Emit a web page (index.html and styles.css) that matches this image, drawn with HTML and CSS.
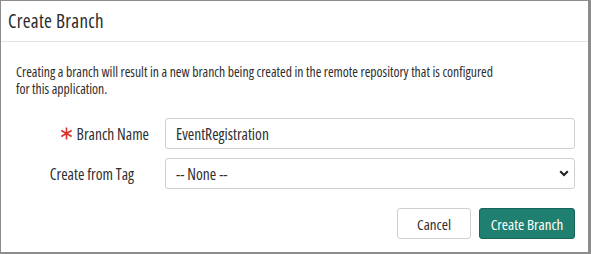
FILE: index.html
```html
<!DOCTYPE html>
<html lang="en">
<head>
    <meta charset="UTF-8">
    <title>Create Branch</title>
    <link rel="stylesheet" href="styles.css">
</head>
<body>
    <div class="modal">
        <div class="modal-header">
            <h1>Create Branch</h1>
        </div>
        <div class="modal-body">
            <p class="intro">Creating a branch will result in a new branch being created in the remote repository that is configured for this application.</p>
            <div class="form-row">
                <label class="form-label" for="branchName">
                    <svg class="required" width="13" height="13" viewBox="0 0 13 13"><path d="M6.5 0.5 V12.5 M1.3 3.5 L11.7 9.5 M1.3 9.5 L11.7 3.5" stroke="#d9312b" stroke-width="1.6" fill="none"/></svg>
                    Branch Name
                </label>
                <input type="text" id="branchName" class="form-control" value="EventRegistration">
            </div>
            <div class="form-row">
                <label class="form-label form-label-optional" for="tag">Create from Tag</label>
                <div class="select-wrap">
                    <select id="tag" class="form-control">
                        <option>-- None --</option>
                    </select>
                    <svg class="chevron" width="10" height="7" viewBox="0 0 10 7"><path d="M1.2 1.2 L5 5 L8.8 1.2" fill="none" stroke="#222" stroke-width="2"/></svg>
                </div>
            </div>
            <div class="actions">
                <button class="btn btn-cancel">Cancel</button>
                <button class="btn btn-primary">Create Branch</button>
            </div>
        </div>
    </div>
</body>
</html>
```

FILE: styles.css
```css
body {
    margin: 0;
    font-family: "Open Sans", "Liberation Sans", sans-serif;
    font-stretch: 75%;
    color: #2e2e2e;
    background: #fff;
}
.modal {
    width: 591px;
    height: 254px;
    box-sizing: border-box;
    border: 1px solid #8c8c8c;
    border-right-width: 3px;
    border-bottom-width: 2px;
    background: #fff;
}
.modal-header {
    height: 40px;
    border-bottom: 1px solid #e3e3e3;
    padding: 0 7px;
    display: flex;
    align-items: center;
}
.modal-header h1 {
    margin: 0;
    font-size: 19px;
    letter-spacing: 0.3px;
    font-weight: normal;
    color: #2b2b2b;
}
.modal-body {
    padding: 21px 13px 0 15px;
}
.intro {
    max-width: 488px;
    margin: 0 0 21px;
    font-size: 13.7px;
    line-height: 17px;
}
.form-row {
    display: flex;
    align-items: center;
    margin-bottom: 9px;
}
.form-label {
    width: 133px;
    padding-right: 16px;
    display: flex;
    align-items: center;
    justify-content: flex-end;
    gap: 4px;
    font-size: 15.5px;
    color: #2e2e2e;
}
.form-label-optional {
    width: 118px;
    padding-right: 31px;
}
.form-control {
    flex: 1;
    height: 31px;
    box-sizing: border-box;
    border: 1px solid #cfcfcf;
    border-radius: 3px;
    padding: 0 10px;
    font-family: inherit;
    font-stretch: inherit;
    font-size: 15.5px;
    color: #2e2e2e;
    background: #fff;
    -webkit-appearance: none;
    appearance: none;
}
.select-wrap {
    flex: 1;
    display: flex;
    position: relative;
}
.chevron {
    position: absolute;
    right: 6px;
    top: 12px;
}
.actions {
    display: flex;
    justify-content: flex-end;
    gap: 8px;
    margin-top: 19px;
}
.btn {
    height: 31px;
    border: 1px solid #cfcfcf;
    border-radius: 3px;
    background: #fff;
    font-family: inherit;
    font-stretch: inherit;
    font-size: 15px;
    color: #2e2e2e;
}
.btn-cancel {
    width: 74px;
}
.btn-primary {
    width: 96px;
    background: #1f7f70;
    border-color: #176457;
    color: #fff;
}
```
